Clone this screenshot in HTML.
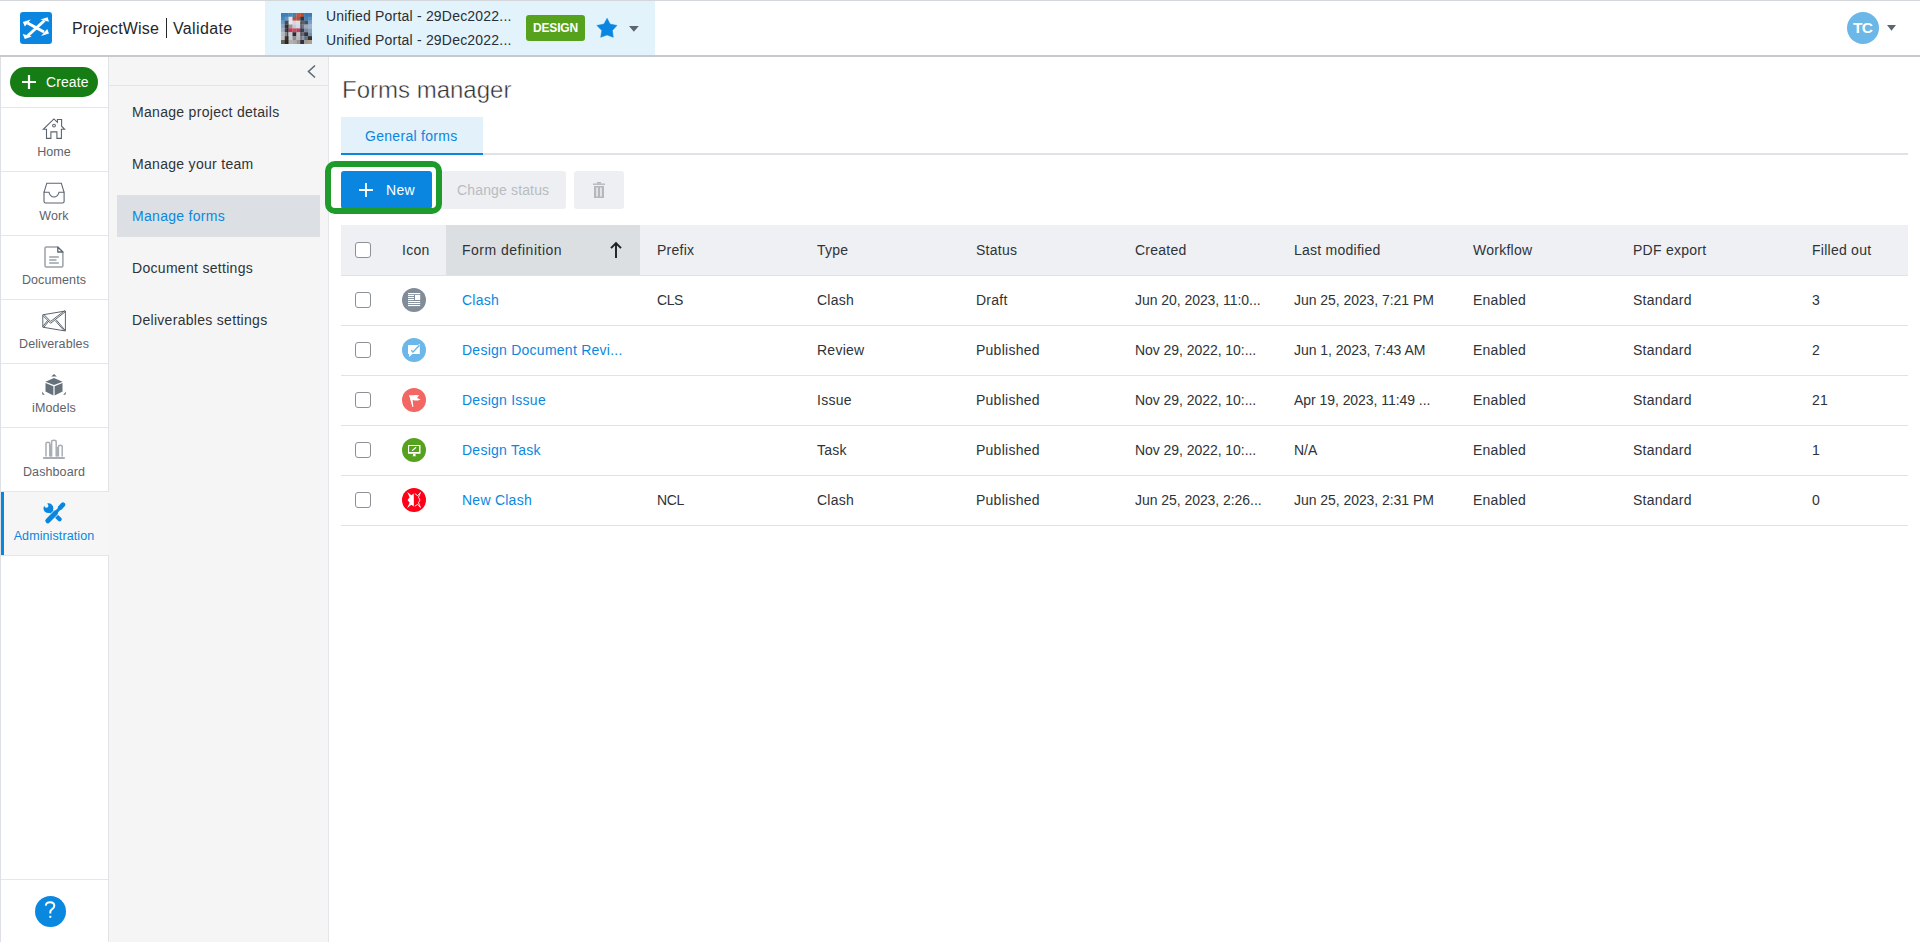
<!DOCTYPE html>
<html><head><meta charset="utf-8">
<style>
*{box-sizing:border-box;margin:0;padding:0}
html,body{width:1920px;height:942px;overflow:hidden;background:#fff;font-family:"Liberation Sans",sans-serif;color:#2e3338}
.a{position:absolute;white-space:nowrap}
.t14{font-size:14px;line-height:20px;letter-spacing:0.25px}
.rl{position:absolute;left:0;width:108px;text-align:center;font-size:12.5px;line-height:16px;color:#5c636b;letter-spacing:0.1px}
.pi{position:absolute;left:132px;font-size:14px;line-height:20px;color:#2e3338;letter-spacing:0.3px;white-space:nowrap}
.hdr{position:absolute;top:240px;font-size:14px;line-height:20px;color:#2e3338;letter-spacing:0.25px;white-space:nowrap}
.cell{position:absolute;font-size:14px;line-height:20px;color:#2e3338;letter-spacing:0.25px;white-space:nowrap}
.lnk{color:#0a88e0}
.dt{letter-spacing:-0.05px}
.cb{position:absolute;left:355px;width:16px;height:16px;border:1px solid #8c9196;border-radius:3px;background:#fff}
.rowline{position:absolute;left:341px;width:1567px;height:1px;background:#dfe2e6}
.sep{position:absolute;left:1px;width:107px;height:1px;background:#e4e6e9}
</style></head><body>
<!-- header -->
<div class="a" style="left:0;top:0;width:1920px;height:1px;background:#d3d6da"></div>
<div class="a" style="left:265px;top:1px;width:390px;height:54px;background:#e3f3fc"></div>
<div class="a" style="left:0;top:55px;width:1920px;height:2px;background:#c6cacf"></div>
<div class="a" style="left:20px;top:12px;width:32px;height:32px;background:#0a86e0;border-radius:3px"></div>
<div class="a" style="left:72px;top:19px;font-size:16px;line-height:20px;color:#23272b;letter-spacing:0.15px">ProjectWise</div>
<div class="a" style="left:166px;top:18px;width:1px;height:20px;background:#23272b"></div>
<div class="a" style="left:173px;top:19px;font-size:16px;line-height:20px;color:#23272b;letter-spacing:0.35px">Validate</div>
<svg class="a" style="left:281px;top:13px" width="31" height="31" viewBox="0 0 31 31">
<defs><filter id="bl" x="0" y="0" width="1" height="1"><feGaussianBlur stdDeviation="0.6" edgeMode="duplicate"/></filter><clipPath id="cp"><rect width="31" height="31"/></clipPath></defs>
<g clip-path="url(#cp)"><g filter="url(#bl)"><rect x="-0.100" y="-0.100" width="4.075" height="4.075" fill="#3b7fb8"/><rect x="3.775" y="-0.100" width="4.075" height="4.075" fill="#3d80b8"/><rect x="7.650" y="-0.100" width="4.075" height="4.075" fill="#4a86b8"/><rect x="11.525" y="-0.100" width="4.075" height="4.075" fill="#3f80b5"/><rect x="15.400" y="-0.100" width="4.075" height="4.075" fill="#c95535"/><rect x="19.275" y="-0.100" width="4.075" height="4.075" fill="#c04a30"/><rect x="23.150" y="-0.100" width="4.075" height="4.075" fill="#3a78b0"/><rect x="27.025" y="-0.100" width="4.075" height="4.075" fill="#3c7ab5"/><rect x="-0.100" y="3.775" width="4.075" height="4.075" fill="#4488bb"/><rect x="3.775" y="3.775" width="4.075" height="4.075" fill="#6a96c0"/><rect x="7.650" y="3.775" width="4.075" height="4.075" fill="#e8e4e6"/><rect x="11.525" y="3.775" width="4.075" height="4.075" fill="#b85040"/><rect x="15.400" y="3.775" width="4.075" height="4.075" fill="#b05040"/><rect x="19.275" y="3.775" width="4.075" height="4.075" fill="#303540"/><rect x="23.150" y="3.775" width="4.075" height="4.075" fill="#4a80b0"/><rect x="27.025" y="3.775" width="4.075" height="4.075" fill="#5a90c0"/><rect x="-0.100" y="7.650" width="4.075" height="4.075" fill="#6a9ac5"/><rect x="3.775" y="7.650" width="4.075" height="4.075" fill="#4a4a5a"/><rect x="7.650" y="7.650" width="4.075" height="4.075" fill="#e8e8ec"/><rect x="11.525" y="7.650" width="4.075" height="4.075" fill="#d8d5da"/><rect x="15.400" y="7.650" width="4.075" height="4.075" fill="#e0dde0"/><rect x="19.275" y="7.650" width="4.075" height="4.075" fill="#5a6070"/><rect x="23.150" y="7.650" width="4.075" height="4.075" fill="#4a5060"/><rect x="27.025" y="7.650" width="4.075" height="4.075" fill="#7aa0c8"/><rect x="-0.100" y="11.525" width="4.075" height="4.075" fill="#8aa5c2"/><rect x="3.775" y="11.525" width="4.075" height="4.075" fill="#3a3035"/><rect x="7.650" y="11.525" width="4.075" height="4.075" fill="#9c8f90"/><rect x="11.525" y="11.525" width="4.075" height="4.075" fill="#c8c8d5"/><rect x="15.400" y="11.525" width="4.075" height="4.075" fill="#d8d8e0"/><rect x="19.275" y="11.525" width="4.075" height="4.075" fill="#707888"/><rect x="23.150" y="11.525" width="4.075" height="4.075" fill="#a0a8b5"/><rect x="27.025" y="11.525" width="4.075" height="4.075" fill="#a0b5cc"/><rect x="-0.100" y="15.400" width="4.075" height="4.075" fill="#a8acb8"/><rect x="3.775" y="15.400" width="4.075" height="4.075" fill="#404048"/><rect x="7.650" y="15.400" width="4.075" height="4.075" fill="#d03050"/><rect x="11.525" y="15.400" width="4.075" height="4.075" fill="#c05060"/><rect x="15.400" y="15.400" width="4.075" height="4.075" fill="#c04060"/><rect x="19.275" y="15.400" width="4.075" height="4.075" fill="#404050"/><rect x="23.150" y="15.400" width="4.075" height="4.075" fill="#7888a0"/><rect x="27.025" y="15.400" width="4.075" height="4.075" fill="#8aa0b8"/><rect x="-0.100" y="19.275" width="4.075" height="4.075" fill="#b8bcc0"/><rect x="3.775" y="19.275" width="4.075" height="4.075" fill="#808890"/><rect x="7.650" y="19.275" width="4.075" height="4.075" fill="#c8ccd0"/><rect x="11.525" y="19.275" width="4.075" height="4.075" fill="#302830"/><rect x="15.400" y="19.275" width="4.075" height="4.075" fill="#c0c0c8"/><rect x="19.275" y="19.275" width="4.075" height="4.075" fill="#706870"/><rect x="23.150" y="19.275" width="4.075" height="4.075" fill="#303038"/><rect x="27.025" y="19.275" width="4.075" height="4.075" fill="#7a90a8"/><rect x="-0.100" y="23.150" width="4.075" height="4.075" fill="#c0c0c0"/><rect x="3.775" y="23.150" width="4.075" height="4.075" fill="#3a3030"/><rect x="7.650" y="23.150" width="4.075" height="4.075" fill="#c8c8c8"/><rect x="11.525" y="23.150" width="4.075" height="4.075" fill="#8a8a8a"/><rect x="15.400" y="23.150" width="4.075" height="4.075" fill="#b8b8c0"/><rect x="19.275" y="23.150" width="4.075" height="4.075" fill="#9098a8"/><rect x="23.150" y="23.150" width="4.075" height="4.075" fill="#607080"/><rect x="27.025" y="23.150" width="4.075" height="4.075" fill="#303030"/><rect x="-0.100" y="27.025" width="4.075" height="4.075" fill="#6a6050"/><rect x="3.775" y="27.025" width="4.075" height="4.075" fill="#302820"/><rect x="7.650" y="27.025" width="4.075" height="4.075" fill="#b0b0b0"/><rect x="11.525" y="27.025" width="4.075" height="4.075" fill="#a8a8a8"/><rect x="15.400" y="27.025" width="4.075" height="4.075" fill="#a09080"/><rect x="19.275" y="27.025" width="4.075" height="4.075" fill="#303040"/><rect x="23.150" y="27.025" width="4.075" height="4.075" fill="#a09a90"/><rect x="27.025" y="27.025" width="4.075" height="4.075" fill="#b0a090"/></g>
<path d="M6.5 12 V31" stroke="#222" stroke-width="1" opacity="0.6"/>
<path d="M20 9 V31" stroke="#222" stroke-width="1" opacity="0.5"/>
</g></svg>
<div class="a" style="left:326px;top:6px;font-size:14px;line-height:20px;color:#2a2e33;letter-spacing:0.2px">Unified Portal - 29Dec2022...</div>
<div class="a" style="left:326px;top:30px;font-size:14px;line-height:20px;color:#2a2e33;letter-spacing:0.2px">Unified Portal - 29Dec2022...</div>
<div class="a" style="left:526px;top:15px;width:59px;height:26px;background:#56a21c;border-radius:3px;color:#fff;font-weight:bold;font-size:12px;line-height:26px;text-align:center;letter-spacing:-0.2px">DESIGN</div>
<div class="a" style="left:1847px;top:12px;width:32px;height:32px;border-radius:50%;background:#6bb7e8;color:#fff;font-size:15.5px;line-height:32px;text-align:center;font-weight:bold;letter-spacing:-0.8px;text-indent:-0.8px">TC</div>

<!-- rail -->
<div class="a" style="left:0;top:57px;width:1px;height:885px;background:#dde0e4"></div>
<div class="a" style="left:108px;top:57px;width:1px;height:885px;background:#e1e4e7"></div>
<div class="a" style="left:10px;top:67px;width:88px;height:30px;border-radius:15px;background:#167c14"></div>
<div class="a" style="left:46px;top:72px;font-size:14px;line-height:20px;color:#fff;letter-spacing:0.1px">Create</div>
<div class="sep" style="top:107px"></div>
<div class="sep" style="top:171px"></div>
<div class="sep" style="top:235px"></div>
<div class="sep" style="top:299px"></div>
<div class="sep" style="top:363px"></div>
<div class="sep" style="top:427px"></div>
<div class="a" style="left:1px;top:492px;width:108px;height:63px;background:#f6f6f6"></div>
<div class="a" style="left:1px;top:492px;width:3px;height:63px;background:#0a86e0"></div>
<div class="sep" style="top:491px"></div>
<div class="sep" style="top:555px"></div>
<div class="sep" style="top:879px"></div>
<div class="rl" style="top:144px">Home</div>
<div class="rl" style="top:208px">Work</div>
<div class="rl" style="top:272px">Documents</div>
<div class="rl" style="top:336px">Deliverables</div>
<div class="rl" style="top:400px">iModels</div>
<div class="rl" style="top:464px">Dashboard</div>
<div class="rl" style="top:528px;color:#0a86e0">Administration</div>
<div class="a" style="left:35px;top:896px;width:31px;height:31px;border-radius:50%;background:#0a88e0"></div>

<!-- panel -->
<div class="a" style="left:109px;top:57px;width:219px;height:885px;background:#f5f5f5"></div>
<div class="a" style="left:328px;top:57px;width:1px;height:885px;background:#e3e5e8"></div>
<div class="a" style="left:109px;top:85px;width:219px;height:1px;background:#e3e5e8"></div>
<div class="a" style="left:117px;top:195px;width:203px;height:42px;background:#dcdfe3"></div>
<div class="pi" style="top:102px">Manage project details</div>
<div class="pi" style="top:154px">Manage your team</div>
<div class="pi lnk" style="top:206px">Manage forms</div>
<div class="pi" style="top:258px">Document settings</div>
<div class="pi" style="top:310px">Deliverables settings</div>

<!-- main -->
<div class="a" style="left:342px;top:75px;font-size:24px;line-height:30px;color:#2b2f33;-webkit-text-stroke:0.45px #fff">Forms manager</div>
<div class="a" style="left:341px;top:117px;width:142px;height:36px;background:#e3f1fb"></div>
<div class="a" style="left:341px;top:153px;width:1567px;height:2px;background:#dfe2e6"></div>
<div class="a" style="left:341px;top:153px;width:142px;height:2px;background:#0a86e0"></div>
<div class="a" style="left:365px;top:126px;font-size:14px;line-height:20px;color:#0a86e0;letter-spacing:0.3px">General forms</div>

<div class="a" style="left:341px;top:171px;width:91px;height:38px;background:#0a86e0;border-radius:3px"></div>
<div class="a" style="left:386px;top:180px;font-size:14px;line-height:20px;color:#fff;letter-spacing:0.3px">New</div>
<div class="a" style="left:441px;top:171px;width:125px;height:38px;background:#eeeff2;border-radius:3px"></div>
<div class="a" style="left:457px;top:180px;font-size:14px;line-height:20px;color:#b8bcc1;letter-spacing:0.15px">Change status</div>
<div class="a" style="left:574px;top:171px;width:50px;height:38px;background:#eeeff2;border-radius:3px"></div>
<div class="a" style="left:325px;top:161px;width:117px;height:53px;border:6px solid #1e9b2a;border-radius:10px"></div>

<!-- table -->
<div class="a" style="left:341px;top:225px;width:1567px;height:50px;background:#eef0f3"></div>
<div class="a" style="left:446px;top:225px;width:194px;height:50px;background:#dcdfe2"></div>
<div class="rowline" style="top:275px"></div>
<div class="rowline" style="top:325px"></div>
<div class="rowline" style="top:375px"></div>
<div class="rowline" style="top:425px"></div>
<div class="rowline" style="top:475px"></div>
<div class="rowline" style="top:525px"></div>
<div class="cb" style="top:242px"></div>
<div class="cb" style="top:292px"></div>
<div class="cb" style="top:342px"></div>
<div class="cb" style="top:392px"></div>
<div class="cb" style="top:442px"></div>
<div class="cb" style="top:492px"></div>
<div class="hdr" style="left:402px">Icon</div>
<div class="hdr" style="left:462px;letter-spacing:0.5px">Form definition</div>
<div class="hdr" style="left:657px">Prefix</div>
<div class="hdr" style="left:817px">Type</div>
<div class="hdr" style="left:976px">Status</div>
<div class="hdr" style="left:1135px">Created</div>
<div class="hdr" style="left:1294px">Last modified</div>
<div class="hdr" style="left:1473px">Workflow</div>
<div class="hdr" style="left:1633px">PDF export</div>
<div class="hdr" style="left:1812px">Filled out</div>

<!-- rows -->
<div class="cell lnk" style="left:462px;top:290px">Clash</div>
<div class="cell" style="left:657px;top:290px;letter-spacing:-0.4px">CLS</div>
<div class="cell" style="left:817px;top:290px">Clash</div>
<div class="cell" style="left:976px;top:290px">Draft</div>
<div class="cell dt" style="left:1135px;top:290px">Jun 20, 2023, 11:0...</div>
<div class="cell dt" style="left:1294px;top:290px">Jun 25, 2023, 7:21 PM</div>
<div class="cell" style="left:1473px;top:290px">Enabled</div>
<div class="cell" style="left:1633px;top:290px">Standard</div>
<div class="cell" style="left:1812px;top:290px">3</div>

<div class="cell lnk" style="left:462px;top:340px">Design Document Revi...</div>
<div class="cell" style="left:817px;top:340px">Review</div>
<div class="cell" style="left:976px;top:340px">Published</div>
<div class="cell dt" style="left:1135px;top:340px">Nov 29, 2022, 10:...</div>
<div class="cell dt" style="left:1294px;top:340px">Jun 1, 2023, 7:43 AM</div>
<div class="cell" style="left:1473px;top:340px">Enabled</div>
<div class="cell" style="left:1633px;top:340px">Standard</div>
<div class="cell" style="left:1812px;top:340px">2</div>

<div class="cell lnk" style="left:462px;top:390px">Design Issue</div>
<div class="cell" style="left:817px;top:390px">Issue</div>
<div class="cell" style="left:976px;top:390px">Published</div>
<div class="cell dt" style="left:1135px;top:390px">Nov 29, 2022, 10:...</div>
<div class="cell dt" style="left:1294px;top:390px">Apr 19, 2023, 11:49 ...</div>
<div class="cell" style="left:1473px;top:390px">Enabled</div>
<div class="cell" style="left:1633px;top:390px">Standard</div>
<div class="cell" style="left:1812px;top:390px">21</div>

<div class="cell lnk" style="left:462px;top:440px">Design Task</div>
<div class="cell" style="left:817px;top:440px">Task</div>
<div class="cell" style="left:976px;top:440px">Published</div>
<div class="cell dt" style="left:1135px;top:440px">Nov 29, 2022, 10:...</div>
<div class="cell dt" style="left:1294px;top:440px">N/A</div>
<div class="cell" style="left:1473px;top:440px">Enabled</div>
<div class="cell" style="left:1633px;top:440px">Standard</div>
<div class="cell" style="left:1812px;top:440px">1</div>

<div class="cell lnk" style="left:462px;top:490px">New Clash</div>
<div class="cell" style="left:657px;top:490px;letter-spacing:-0.4px">NCL</div>
<div class="cell" style="left:817px;top:490px">Clash</div>
<div class="cell" style="left:976px;top:490px">Published</div>
<div class="cell dt" style="left:1135px;top:490px">Jun 25, 2023, 2:26...</div>
<div class="cell dt" style="left:1294px;top:490px">Jun 25, 2023, 2:31 PM</div>
<div class="cell" style="left:1473px;top:490px">Enabled</div>
<div class="cell" style="left:1633px;top:490px">Standard</div>
<div class="cell" style="left:1812px;top:490px">0</div>

<!-- ICONS overlay -->
<svg class="a" style="left:0;top:0" width="1920" height="942" viewBox="0 0 1920 942">
<!-- logo arrows -->
<g fill="#fff" stroke="none">
 <path d="M27.5 36 L44.5 20.5" stroke="#fff" stroke-width="3" fill="none"/>
 <path d="M27.5 23 L44 32" stroke="#fff" stroke-width="3" fill="none"/>
 <path d="M47.6 17.2 L40.4 19.6 L49 21.7 Z"/>
 <path d="M24.8 39 L22.7 34 L31.8 36.4 Z"/>
 <path d="M22.9 22.1 L24.8 26.6 L30.8 19.6 Z"/>
 <path d="M49 33.6 L41.1 36 L47.2 28.9 Z"/>
</g>
<!-- star -->
<path d="M607.1 18.2 L610.1 24.1 L617 25.4 L612.4 30.4 L613.3 37.3 L607.1 35 L600.7 37.3 L601.8 30.4 L596.9 25.4 L603.9 24.1 Z" fill="#0a86e0" stroke="#0a86e0" stroke-width="0.5" stroke-linejoin="round"/>
<!-- carets -->
<path d="M629 26 H638.8 L633.9 31.8 Z" fill="#5d6670"/>
<path d="M1887 25 H1896 L1891.5 30.8 Z" fill="#5d6670"/>
<!-- create plus -->
<path d="M29 75 V89 M22 82 H36" stroke="#fff" stroke-width="2.2"/>
<!-- panel chevron -->
<path d="M315 65.5 L308.5 71.5 L315 77.5" stroke="#5d6a75" stroke-width="1.6" fill="none"/>
<!-- home -->
<g stroke="#5b6570" stroke-width="1.1" fill="none">
 <path d="M46.5 138.4 V129.3 H43.3 L53.9 118.9 L57.4 122.3 V119.5 H61.6 V126.2 L64.6 129.3 H61.4 V138.4 H56.9 V131.9 H50.9 V138.4 Z"/>
 <circle cx="54" cy="125.6" r="1.4"/>
</g>
<!-- work inbox -->
<g stroke="#5b6570" stroke-width="1.1" fill="none">
 <path d="M44 192.3 L46.8 183.2 H61.3 L64.1 192.3"/>
 <path d="M44 192.3 V201.5 Q44 203 45.5 203 H62.6 Q64.1 203 64.1 201.5 V192.3 H59 Q57.5 197 54 197 Q50.5 197 49 192.3 Z"/>
</g>
<!-- documents -->
<g stroke="#9aa1a9" stroke-width="1.5" fill="none">
 <path d="M57.8 247 H46.2 Q45 247 45 248.2 V265.8 Q45 267 46.2 267 H61.7 Q62.9 267 62.9 265.8 V252"/>
 <path d="M49.2 257 H58.8 M49.2 260 H56.5 M49.2 263 H58.8"/>
</g>
<path d="M57.8 247 V252 H62.9 Z" stroke="#5b6570" stroke-width="1.3" fill="none" stroke-linejoin="round"/>
<!-- deliverables envelope -->
<g stroke="#5b6570" stroke-width="1" fill="none" stroke-linejoin="round">
 <path d="M42.8 314.8 L65.4 311 V331 L42.8 327.2 Z"/>
 <path d="M42.8 315.5 L50.6 323.3 L65.4 311.6"/>
 <path d="M43.6 314.2 L50.6 321.4 L64.8 310.5"/>
 <path d="M42.8 326.5 L47.8 320.2 M43.8 327.4 L48.8 321"/>
 <path d="M65.2 330.4 L56.2 319.8 M64.4 331 L55.2 320.6"/>
</g>
<!-- imodels cube -->
<g fill="#66717c">
 <path d="M54 378 L62.6 381.8 L54 385 L45.4 381.8 Z"/>
 <path d="M45.5 383 L53.4 386.2 V395.4 L45.5 391.5 Z"/>
 <path d="M62.5 383 L54.6 386.2 V395.4 L62.5 391.5 Z"/>
 <path d="M54 374 L56.8 376.5 H51.2 Z"/>
 <path d="M42 391.5 L44.8 394.9 L42.3 394.6 Z"/>
 <path d="M66 391.5 L63.2 394.9 L65.7 394.6 Z"/>
</g>
<!-- dashboard -->
<g stroke="#a9aeb5" stroke-width="1.5" fill="none">
 <path d="M46 456.5 V443.9 Q46 442.3 47.9 442.3 Q49.8 442.3 49.8 443.9 V456.5"/>
 <path d="M51.6 456.5 V441.9 Q51.6 440.3 53.9 440.3 Q56.2 440.3 56.2 441.9 V456.5"/>
 <path d="M58.4 456.5 V446.9 Q58.4 445.3 60.3 445.3 Q62.2 445.3 62.2 446.9 V456.5"/>
</g>
<path d="M49.8 444.5 H51.6 V456.5 H49.8 Z M56.2 447 H58.4 V456.5 H56.2 Z" fill="#a9aeb5"/>
<path d="M43.1 458 H64.8" stroke="#a9aeb5" stroke-width="2"/>
<!-- admin tools -->
<g>
 <path d="M50.5 510.5 L59.6 519.2" stroke="#0a86e0" stroke-width="4.2" stroke-linecap="round"/>
 <circle cx="48.4" cy="508.2" r="4.9" fill="#0a86e0"/>
 <circle cx="46.4" cy="505.8" r="2" fill="#f6f6f6"/>
 <path d="M46.4 505.8 L42 506.5 L43.5 500.5 L48 502 Z" fill="#f6f6f6"/>
 <path d="M47.8 520.8 L55.5 513 L61.5 506.5" stroke="#f6f6f6" stroke-width="6.2" stroke-linecap="round" fill="none"/>
 <path d="M47.8 520.8 L55.5 513" stroke="#0a86e0" stroke-width="5" stroke-linecap="round"/>
 <path d="M55 513.5 L60.5 507.5" stroke="#0a86e0" stroke-width="3.2"/>
 <path d="M60.2 507.6 L63 504.6" stroke="#0a86e0" stroke-width="4.6" stroke-linecap="round"/>
</g>
<!-- help ? -->
<path d="M45.8 905.6 Q46.2 902.3 50.2 902.3 Q54.3 902.3 54.3 905.8 Q54.3 908 51.9 909.4 Q50.3 910.3 50.3 912.3 V913.6" stroke="#fff" stroke-width="2" fill="none"/>
<rect x="49.3" y="915.8" width="2" height="2" fill="#fff"/>
<!-- new plus -->
<path d="M366 183 V197 M359 190 H373" stroke="#fff" stroke-width="1.8"/>
<!-- trash -->
<g fill="#b4b8bd">
 <rect x="593" y="183.5" width="12" height="1.4"/>
 <rect x="597" y="182" width="4" height="1.6"/>
 <path d="M594 186 H604 V198 H594 Z M596.3 187.5 V196.5 H597.8 V187.5 Z M600.2 187.5 V196.5 H601.7 V187.5 Z" fill-rule="evenodd"/>
</g>
<!-- sort arrow -->
<path d="M616 258 V243.5 M611 248.2 L616 243 L621 248.2" stroke="#1c2024" stroke-width="1.9" fill="none"/>
<!-- row icons -->
<circle cx="414" cy="300" r="12" fill="#808c98"/>
<g fill="#fff">
 <rect x="408" y="293" width="12.2" height="1.2"/>
 <rect x="408" y="295" width="6" height="1.1"/>
 <rect x="408" y="297" width="6" height="1.1"/>
 <rect x="408" y="299" width="6" height="1.1"/>
 <rect x="415" y="295" width="5.2" height="5"/>
 <rect x="408" y="301" width="12.2" height="1.1"/>
 <rect x="408" y="303" width="12.2" height="1.1"/>
 <rect x="408" y="305" width="12.2" height="1.1"/>
</g>
<circle cx="414" cy="350" r="12" fill="#6bb7ea"/>
<path d="M408 345 H418 L419.8 343.8 V354 H412.3 L409.2 357 L409 354 H408 Z" fill="#fff"/>
<path d="M411.2 350.3 L413 352 L419.5 345.2" stroke="#6bb7ea" stroke-width="1.4" fill="none"/>
<circle cx="414" cy="400" r="12" fill="#f26663"/>
<path d="M409 395 Q411 395.6 413 395.2 Q415.5 394.6 419.2 395.2 L417 398 L420.6 399.4 Q417 401 415 400.5 L412.6 400 L413.4 406.8 L412.4 407 Z" fill="#fff"/>
<circle cx="414" cy="450" r="12" fill="#56a11e"/>
<path d="M408 445 H420.5 V453.8 H408 Z M409.1 446.1 V452.1 H419.1 V446.1 Z" fill="#fff" fill-rule="evenodd"/>
<path d="M413.1 453.8 H415.5 V455.5 L416.3 456.3 H412.3 L413.1 455.5 Z" fill="#fff"/>
<path d="M412.4 450.5 L415.8 447.5" stroke="#fff" stroke-width="1.1" stroke-linecap="round"/>
<circle cx="414" cy="500" r="12" fill="#ff0019"/>
<path d="M413.8 493.4 L411.4 495.2 L407.2 491.9 L409.6 497.2 L407.6 500 L409.6 502.8 L407.2 508.1 L411.4 504.8 L413.8 506.5 Z" fill="#fff"/>
<path d="M414.8 493.6 L417.6 495.6 L420.4 492.6 L418.5 497.3 L420 500 L418.5 502.7 L420.4 507.4 L417.6 504.4 L414.8 506.2" fill="none" stroke="#fff" stroke-width="0.9" stroke-linejoin="round"/>
</svg>
</body></html>
